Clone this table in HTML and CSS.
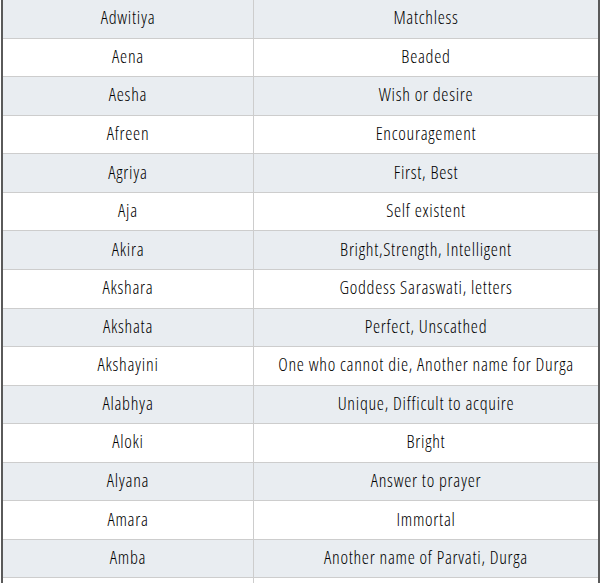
FILE: index.html
```html
<!DOCTYPE html>
<html>
<head>
<meta charset="utf-8">
<link rel="stylesheet" href="styles.css">
</head>
<body>
<div class="names">
  <div class="row alt"><div class="cell name">Adwitiya</div><div class="cell meaning">Matchless</div></div>
  <div class="row"><div class="cell name">Aena</div><div class="cell meaning">Beaded</div></div>
  <div class="row alt"><div class="cell name">Aesha</div><div class="cell meaning">Wish or desire</div></div>
  <div class="row"><div class="cell name">Afreen</div><div class="cell meaning">Encouragement</div></div>
  <div class="row alt"><div class="cell name">Agriya</div><div class="cell meaning">First, Best</div></div>
  <div class="row"><div class="cell name">Aja</div><div class="cell meaning">Self existent</div></div>
  <div class="row alt"><div class="cell name">Akira</div><div class="cell meaning">Bright,Strength, Intelligent</div></div>
  <div class="row"><div class="cell name">Akshara</div><div class="cell meaning">Goddess Saraswati, letters</div></div>
  <div class="row alt"><div class="cell name">Akshata</div><div class="cell meaning">Perfect, Unscathed</div></div>
  <div class="row"><div class="cell name">Akshayini</div><div class="cell meaning">One who cannot die, Another name for Durga</div></div>
  <div class="row alt"><div class="cell name">Alabhya</div><div class="cell meaning">Unique, Difficult to acquire</div></div>
  <div class="row"><div class="cell name">Aloki</div><div class="cell meaning">Bright</div></div>
  <div class="row alt"><div class="cell name">Alyana</div><div class="cell meaning">Answer to prayer</div></div>
  <div class="row"><div class="cell name">Amara</div><div class="cell meaning">Immortal</div></div>
  <div class="row alt"><div class="cell name">Amba</div><div class="cell meaning">Another name of Parvati, Durga</div></div>
  <div class="row"><div class="cell name"></div><div class="cell meaning"></div></div>
</div>
</body>
</html>
```
FILE: styles.css
```css
html, body {
  margin: 0;
  padding: 0;
  background: #ffffff;
}
.names {
  margin-left: 1px;
  width: 599px;
  height: 583px;
  overflow: hidden;
  box-sizing: border-box;
  border-left: 2px solid #5a5a5a;
  border-right: 2px solid #5a5a5a;
  font-family: "Open Sans", sans-serif;
  font-stretch: condensed;
  font-weight: 300;
  font-size: 18px;
  letter-spacing: 0.72px;
  color: #000000;
}
.row {
  display: grid;
  grid-template-columns: 251px 1fr;
  height: 38.57px;
  box-sizing: border-box;
  border-bottom: 1px solid #cdcdcd;
  background: #ffffff;
}
.row.alt {
  background: #e9edf1;
}
.cell {
  display: flex;
  align-items: center;
  justify-content: center;
  padding-bottom: 3px;
  box-sizing: border-box;
  white-space: nowrap;
}
.name {
  border-right: 1px solid #cdcdcd;
}
```
